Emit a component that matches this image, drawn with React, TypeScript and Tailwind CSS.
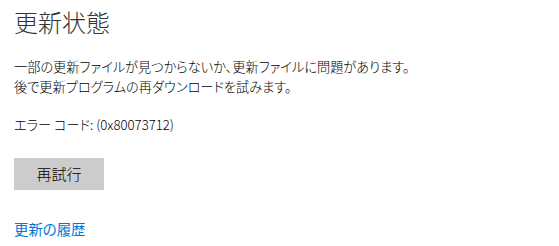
export default function App() {
  return (
    <div className="w-[559px] h-[246px] bg-white px-[14px] pt-[6px] font-['Noto_Sans_CJK_JP','Noto_Sans',sans-serif] [font-feature-settings:'palt'] text-black">
      <h1 className="text-[24px] leading-[32px] font-light text-[#333]">更新状態</h1>
      <div className="mt-[19px] text-[13.2px] leading-[20px] font-light">
        <p>一部の更新ファイルが見つからないか、更新ファイルに問題があります。</p>
        <p>後で更新プログラムの再ダウンロードを試みます。</p>
      </div>
      <p className="mt-[18px] text-[13.2px] leading-[20px] font-light">エラー コード: (0x80073712)</p>
      <button className="mt-[23px] flex w-[90px] h-[32px] items-center justify-center bg-[#cccccc] text-[15px] font-light text-black">
        再試行
      </button>
      <a className="mt-[29px] block w-fit text-[14.4px] leading-[20px] text-[#0078d7]" href="#">
        更新の履歴
      </a>
    </div>
  );
}
